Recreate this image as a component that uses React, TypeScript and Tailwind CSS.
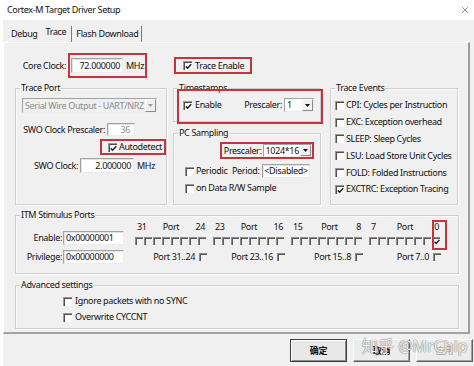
import { X } from 'lucide-react';

function Check({ on }: { on?: boolean }) {
    return (
        <span className="inline-flex w-[9px] h-[9px] shrink-0 items-center justify-center bg-white border-t border-l border-t-[#9a9a9a] border-l-[#9a9a9a] shadow-[inset_1px_1px_0_#4f4f4f]">
            {on && (
                <svg width="7" height="7" viewBox="0 0 7 7" className="ml-[1px] mt-[1px]">
                    <path d="M0.8 3.4 L2.6 5.2 L6.2 1.2" fill="none" stroke="#1b1b1b" strokeWidth="1.5" />
                </svg>
            )}
        </span>
    );
}

function SmallBox({ on }: { on?: boolean }) {
    return (
        <span className="inline-flex w-[8px] h-[8px] shrink-0 items-center justify-center border-t border-l border-t-[#8a8a8a] border-l-[#8a8a8a] shadow-[inset_1px_1px_0_#5a5a5a]">
            {on && (
                <svg width="6" height="6" viewBox="0 0 6 6" className="ml-[1px] mt-[1px]">
                    <path d="M0.6 2.8 L2.2 4.5 L5.4 0.9" fill="none" stroke="#1b1b1b" strokeWidth="1.4" />
                </svg>
            )}
        </span>
    );
}

function Field({ value, className, muted }: { value: string; className: string; muted?: boolean }) {
    return (
        <div
            className={`flex items-center overflow-hidden bg-white border-t border-l border-b border-r border-t-[#a3a3a3] border-l-[#a3a3a3] border-b-[#ececec] border-r-[#ececec] shadow-[inset_1px_1px_0_#e2e2e2] ${className}`}
        >
            <span className={muted ? 'text-[#8d8d8d]' : ''}>{value}</span>
        </div>
    );
}

function Arrow({ muted }: { muted?: boolean }) {
    return (
        <span className="flex w-[11px] h-full shrink-0 items-center justify-center bg-[#f0f0f0] border-t border-l border-b border-r border-t-white border-l-white border-b-[#8a8a8a] border-r-[#8a8a8a]">
            <svg width="5" height="3" viewBox="0 0 5 3">
                <path d="M0 0 H5 L2.5 3 Z" fill={muted ? '#9a9a9a' : '#111'} />
            </svg>
        </span>
    );
}

function Select({ value, className, muted }: { value: string; className: string; muted?: boolean }) {
    return (
        <div
            className={`flex items-stretch border-t border-l border-b border-r border-t-[#a3a3a3] border-l-[#a3a3a3] border-b-[#ececec] border-r-[#ececec] ${muted ? 'bg-[#f0f0f0]' : 'bg-white'} ${className}`}
        >
            <span className={`flex-1 overflow-hidden flex items-center pl-[2px] ${muted ? 'text-[#8d8d8d]' : ''}`}>{value}</span>
            <Arrow muted={muted} />
        </div>
    );
}

function CheckRow({ label, on, className }: { label: string; on?: boolean; className: string }) {
    return (
        <div className={`flex items-center gap-[2px] ${className}`}>
            <Check on={on} />
            <span>{label}</span>
        </div>
    );
}

const fieldset = 'border border-[#cfcfcf] shadow-[inset_1px_1px_0_#fafafa,1px_1px_0_#fafafa] relative';
const legend = 'ml-[4px] px-[1px] leading-[12px]';

const portGroups = [
    { hi: '31', lo: '24', label: 'Port 31..24' },
    { hi: '23', lo: '16', label: 'Port 23..16' },
    { hi: '15', lo: '8', label: 'Port 15..8' },
    { hi: '7', lo: '0', label: 'Port 7..0' },
];

const traceEvents = [
    { label: 'CPI: Cycles per Instruction' },
    { label: 'EXC: Exception overhead' },
    { label: 'SLEEP: Sleep Cycles' },
    { label: 'LSU: Load Store Unit Cycles' },
    { label: 'FOLD: Folded Instructions' },
    { label: 'EXCTRC: Exception Tracing', on: true },
];

export default function App() {
    return (
        <div className="relative w-[474px] h-[366px] overflow-hidden whitespace-nowrap bg-white text-[9px] leading-[12px] tracking-[-0.35px] text-[#111] font-['Noto_Sans','Noto_Sans_CJK_SC',sans-serif]">
            {/* Title bar */}
            <div className="flex h-[20px] items-center justify-between pl-[7px] pr-[4px]">
                <span>Cortex-M Target Driver Setup</span>
                <X size={10} strokeWidth={1.2} className="text-[#222]" />
            </div>

            <div className="ml-[3px] h-[346px] bg-[#f0f0f0]">
                {/* Tabs */}
                <div className="flex h-[22px] items-end pl-[7px]">
                    <span className="mb-[2px] px-[1px]">Debug</span>
                    <span className="mb-[4px] ml-[5px] px-[2px]">Trace</span>
                    <span className="ml-[3px] h-[16px] w-px bg-[#7a7a7a]" />
                    <span className="mb-[2px] ml-[3px] px-[1px]">Flash Download</span>
                    <span className="ml-[1px] h-[16px] w-px bg-[#7a7a7a]" />
                </div>

                {/* Panel */}
                <div className="w-[467px] h-[292px] border-t border-l border-r-2 border-b-2 border-t-white border-l-white border-r-[#9c9c9c] border-b-[#a4a4a4]">
                    {/* Core clock + trace enable */}
                    <div className="mt-[10px] flex items-center">
                        <span className="w-[62px] text-right">Core Clock:</span>
                        <div className="ml-[2px] flex h-[25px] w-[79px] items-center border-2 border-[#c3343f]">
                            <Field value="72.000000" className="ml-[1px] h-[15px] w-[52px] justify-end pr-[2px]" />
                            <span className="ml-[3px]">MHz</span>
                        </div>
                        <div className="ml-[27px] flex h-[17px] w-[78px] items-center gap-[3px] border-2 border-[#c3343f] pl-[7px]">
                            <Check on />
                            <span>Trace Enable</span>
                        </div>
                    </div>

                    {/* Groups row */}
                    <div className="mt-[4px] ml-[11px] flex items-start">
                        <fieldset className={`${fieldset} h-[123px] w-[152px]`}>
                            <legend className={legend}>Trace Port</legend>
                            <Select
                                value="Serial Wire Output - UART/NRZ"
                                muted
                                className="mt-[4px] ml-[6px] h-[15px] w-[135px]"
                            />
                            <div className="mt-[10px] ml-[6px] flex items-center">
                                <span className="w-[83px] text-right">SWO Clock Prescaler:</span>
                                <Field value="36" muted className="ml-[2px] h-[13px] w-[28px] justify-end pr-[4px]" />
                            </div>
                            <div className="mt-[3px] ml-[84px] flex h-[16px] w-[66px] items-center gap-[2px] border-2 border-[#c3343f] pl-[6px]">
                                <Check on />
                                <span>Autodetect</span>
                            </div>
                            <div className="mt-[3px] flex items-center">
                                <span className="w-[62px] text-right">SWO Clock:</span>
                                <Field value="2.000000" className="ml-[2px] h-[15px] w-[54px] justify-end pr-[2px]" />
                                <span className="ml-[3px]">MHz</span>
                            </div>
                        </fieldset>

                        <div className="ml-[6px] flex flex-col">
                            <fieldset className={`${fieldset} h-[40px] w-[148px]`}>
                                <legend className={legend}>Timestamps</legend>
                                <div className="mt-[4px] flex items-center">
                                    <CheckRow label="Enable" on className="ml-[9px] w-[59px] gap-[3px]" />
                                    <span className="w-[40px] text-right">Prescaler:</span>
                                    <Select value="1" className="ml-[2px] h-[14px] w-[30px]" />
                                </div>
                                <div className="absolute left-[3px] top-[-5px] h-[35px] w-[146px] border-2 border-[#c3343f]" />
                            </fieldset>

                            <fieldset className={`${fieldset} mt-[5px] h-[78px] w-[148px]`}>
                                <legend className={legend}>PC Sampling</legend>
                                <div className="mt-[3px] ml-[46px] flex h-[17px] w-[94px] items-center border-2 border-[#c3343f] pl-[1px]">
                                    <span className="w-[39px] text-right">Prescaler:</span>
                                    <Select value="1024*16" className="ml-[1px] h-[13px] w-[50px]" />
                                </div>
                                <div className="mt-[5px] flex items-center">
                                    <CheckRow label="Periodic" className="ml-[11px] w-[47px]" />
                                    <span className="w-[30px]">Period:</span>
                                    <Field value="<Disabled>" className="h-[14px] w-[48px] justify-center" />
                                </div>
                                <CheckRow label="on Data R/W Sample" className="mt-[4px] ml-[11px]" />
                            </fieldset>
                        </div>

                        <fieldset className={`${fieldset} ml-[9px] h-[123px] w-[128px]`}>
                            <legend className={legend}>Trace Events</legend>
                            <div className="mt-[3px] flex flex-col">
                                {traceEvents.map((ev) => (
                                    <CheckRow key={ev.label} label={ev.label} on={ev.on} className="ml-[4px] h-[16.8px]" />
                                ))}
                            </div>
                        </fieldset>
                    </div>

                    {/* ITM Stimulus Ports */}
                    <fieldset className={`${fieldset} mt-[4px] ml-[11px] h-[65px] w-[444px]`}>
                        <legend className={legend}>ITM Stimulus Ports</legend>
                        <div className="flex items-start">
                            <div className="mt-[10px] flex flex-col gap-[5px]">
                                <div className="flex items-center">
                                    <span className="w-[46px] text-right">Enable:</span>
                                    <Field value="0x00000001" className="ml-[1px] h-[14px] w-[61px] pl-[2px]" />
                                </div>
                                <div className="flex items-center">
                                    <span className="w-[46px] text-right">Privilege:</span>
                                    <Field value="0x00000000" className="ml-[1px] h-[14px] w-[61px] pl-[2px]" />
                                </div>
                            </div>
                            <div className="ml-[11px] flex gap-[6px]">
                                {portGroups.map((g, gi) => (
                                    <div key={g.label} className="flex w-[72px] flex-col">
                                        <div className="flex h-[12px] justify-between px-[2px]">
                                            <span>{g.hi}</span>
                                            <span>Port</span>
                                            <span>{g.lo}</span>
                                        </div>
                                        <div className="mt-[4px] grid grid-cols-8">
                                            {Array.from({ length: 8 }).map((_, i) => (
                                                <SmallBox key={i} on={gi === 3 && i === 7} />
                                            ))}
                                        </div>
                                        <div className="mt-[6px] flex items-center justify-end gap-[4px]">
                                            <span>{g.label}</span>
                                            <SmallBox />
                                        </div>
                                    </div>
                                ))}
                            </div>
                        </div>
                        <div className="absolute left-[416px] top-[-1px] h-[30px] w-[15px] border-2 border-[#c3343f]" />
                    </fieldset>

                    {/* Advanced settings */}
                    <fieldset className={`${fieldset} mt-[5px] ml-[11px] h-[50px] w-[444px]`}>
                        <legend className={legend}>Advanced settings</legend>
                        <CheckRow label="Ignore packets with no SYNC" className="mt-[3px] ml-[47px] h-[14px] gap-[3px]" />
                        <CheckRow label="Overwrite CYCCNT" className="mt-[2px] ml-[47px] h-[14px] gap-[3px]" />
                    </fieldset>
                </div>

                {/* Buttons */}
                <div className="mt-[5px] flex justify-end gap-[6px] pr-[1px]">
                    <button className="h-[23px] w-[57px] border border-[#3c3c3c] bg-[#e8e8e8] shadow-[inset_1px_1px_0_#fff,inset_-1px_-1px_0_#8a8a8a] text-[9px] font-bold">
                        确定
                    </button>
                    <button className="h-[23px] w-[57px] border-t border-l border-b border-r border-t-white border-l-white border-b-[#5e5e5e] border-r-[#5e5e5e] bg-[#ececec] shadow-[inset_-1px_-1px_0_#a0a0a0] text-[9px] font-bold">
                        取消
                    </button>
                    <button className="h-[23px] w-[57px] border-t border-l border-b border-r border-t-white border-l-white border-b-[#5e5e5e] border-r-[#5e5e5e] bg-[#ececec] shadow-[inset_-1px_-1px_0_#a0a0a0] text-[9px] text-[#a0a0a0]">
                        应用
                    </button>
                </div>
            </div>

            {/* Watermark */}
            <div className="absolute left-[362px] top-[336px] text-[16px] leading-[20px] tracking-normal text-white/90 [text-shadow:0_0_1px_#6b6b6b,0_0_1px_#6b6b6b]">
                知乎 @MrChip
            </div>
        </div>
    );
}
